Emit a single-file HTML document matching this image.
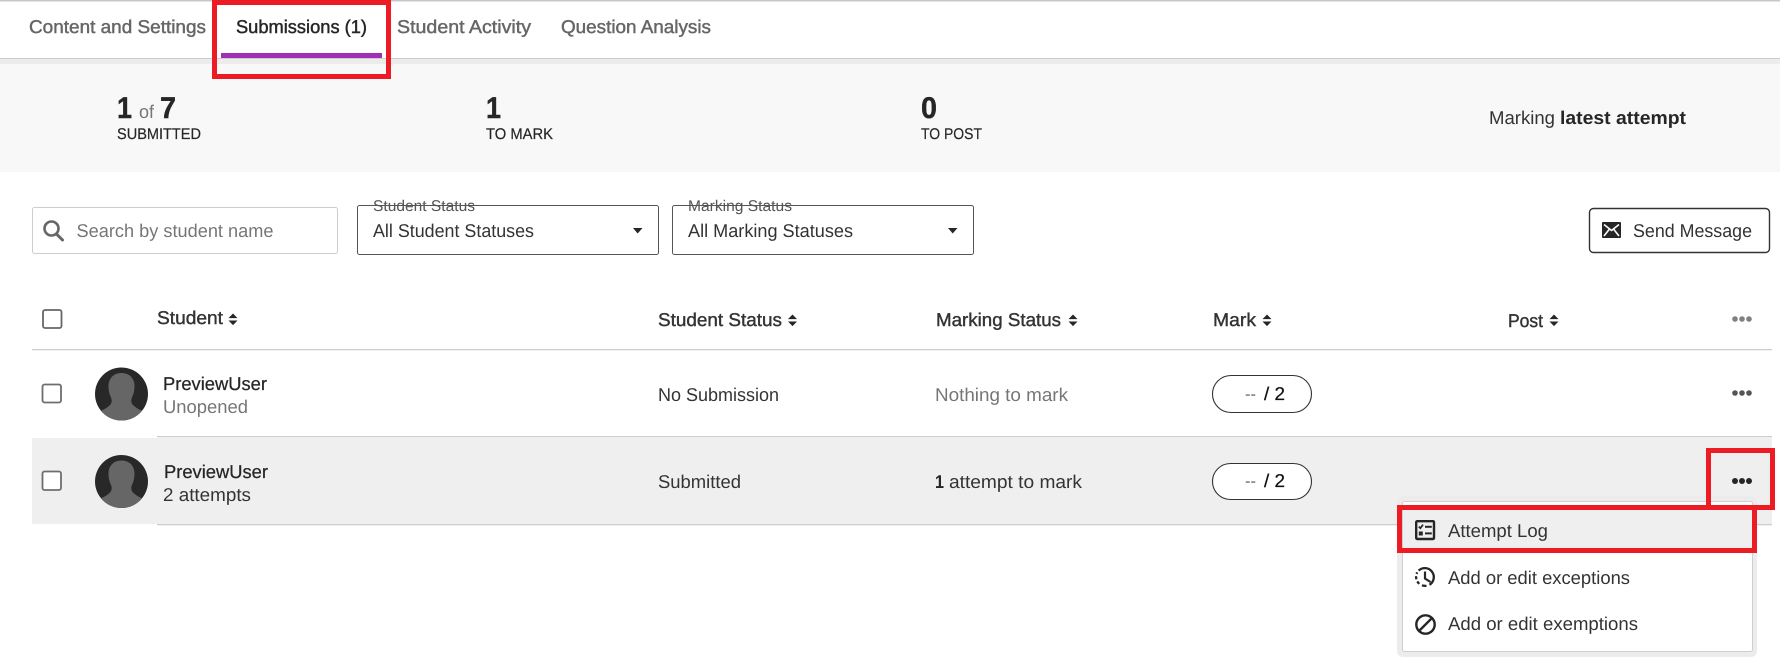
<!DOCTYPE html>
<html lang="en">
<head>
<meta charset="utf-8">
<title>Submissions</title>
<style>
html,body{margin:0;padding:0;background:#fff;width:1780px;height:662px;overflow:hidden}
svg{display:block}
text{font-family:"Liberation Sans",Arial,sans-serif;font-size:18.5px;fill:#333;text-rendering:geometricPrecision}
.semi{stroke:#333;stroke-width:.4px}
.tab{fill:#666;stroke:#666;stroke-width:.45px}
.act{fill:#262626;stroke:#262626;stroke-width:.45px}
.b{font-weight:700;fill:#262626}
.num{font-size:30px;stroke:#262626;stroke-width:.4px}
.g{fill:#767676}
.sm{font-size:15.5px;fill:#262626;stroke:#262626;stroke-width:.2px}
.lbl{font-size:15.5px;fill:#555}
</style>
</head>
<body>
<svg xmlns="http://www.w3.org/2000/svg" width="1780" height="662" viewBox="0 0 1780 662">
<defs>
<g id="sort"><path d="M0 4.6 L4.5 0 L9 4.6 Z M0 7 L9 7 L4.5 11.6 Z" fill="#262626"/></g>
<g id="av">
<circle cx="0" cy="0" r="26.5" fill="#282828"/>
<clipPath id="avc"><circle cx="0" cy="0" r="26.5"/></clipPath>
<g clip-path="url(#avc)">
<path d="M0 -21 C8 -21 13 -15.5 13 -8 C13 -3 12 0 10.5 3.5 C9.3 6 9.5 9.5 12 11.5 C14.5 13.5 17 15.5 21 17 L24 30 L-24 30 L-21 17 C-17 15.5 -14.5 13.5 -12 11.5 C-9.5 9.5 -9.3 6 -10.5 3.5 C-12 0 -13 -3 -13 -8 C-13 -15.5 -8 -21 0 -21 Z" fill="#666"/>
</g>
</g>
</defs>

<!-- top tabs -->
<rect x="0" y="0" width="1780" height="1.5" fill="#c8c8c8"/>
<text class="tab" x="29" y="33" textLength="177" lengthAdjust="spacingAndGlyphs">Content and Settings</text>
<text class="act" x="236" y="33" textLength="131" lengthAdjust="spacingAndGlyphs">Submissions (1)</text>
<text class="tab" x="397" y="33" textLength="134" lengthAdjust="spacingAndGlyphs">Student Activity</text>
<text class="tab" x="561" y="33" textLength="150" lengthAdjust="spacingAndGlyphs">Question Analysis</text>
<rect x="221" y="53" width="161" height="5" fill="#a12fb5"/>
<rect x="0" y="58" width="1780" height="1" fill="#cdcdcd"/>
<rect x="0" y="59" width="1780" height="5" fill="#ececec"/>

<!-- stats band -->
<rect x="0" y="64" width="1780" height="108" fill="#f8f8f8"/>
<text class="b num" x="117" y="118" textLength="15" lengthAdjust="spacingAndGlyphs">1</text>
<text class="g" x="139" y="118" textLength="15" lengthAdjust="spacingAndGlyphs">of</text>
<text class="b num" x="160" y="118" textLength="16" lengthAdjust="spacingAndGlyphs">7</text>
<text class="sm" x="117" y="139" textLength="84" lengthAdjust="spacingAndGlyphs">SUBMITTED</text>
<text class="b num" x="486" y="118" textLength="15" lengthAdjust="spacingAndGlyphs">1</text>
<text class="sm" x="486" y="139" textLength="67" lengthAdjust="spacingAndGlyphs">TO MARK</text>
<text class="b num" x="921" y="118" textLength="16" lengthAdjust="spacingAndGlyphs">0</text>
<text class="sm" x="921" y="139" textLength="61" lengthAdjust="spacingAndGlyphs">TO POST</text>
<text x="1489" y="124" textLength="66" lengthAdjust="spacingAndGlyphs">Marking</text>
<text class="b" x="1560" y="124" textLength="126" lengthAdjust="spacingAndGlyphs">latest attempt</text>

<!-- search -->
<rect x="32.5" y="207.5" width="305" height="46" rx="2" fill="#fff" stroke="#cdcdcd"/>
<circle cx="51.5" cy="228.5" r="7" fill="none" stroke="#666" stroke-width="2.6"/>
<path d="M56.5 234 L62.5 240" stroke="#666" stroke-width="3" stroke-linecap="round"/>
<text class="g" x="76.5" y="237" textLength="197" lengthAdjust="spacingAndGlyphs">Search by student name</text>

<!-- selects -->
<rect x="357.5" y="205.5" width="301" height="49" rx="2" fill="#fff" stroke="#555"/>
<text class="lbl" x="373" y="211" textLength="102" lengthAdjust="spacingAndGlyphs">Student Status</text>
<text x="373" y="237" textLength="161" lengthAdjust="spacingAndGlyphs">All Student Statuses</text>
<path d="M633 228 L642.5 228 L637.7 233.5 Z" fill="#262626"/>

<rect x="672.5" y="205.5" width="301" height="49" rx="2" fill="#fff" stroke="#555"/>
<text class="lbl" x="688" y="211" textLength="104" lengthAdjust="spacingAndGlyphs">Marking Status</text>
<text x="688" y="237" textLength="165" lengthAdjust="spacingAndGlyphs">All Marking Statuses</text>
<path d="M948 228 L957.5 228 L952.7 233.5 Z" fill="#262626"/>

<!-- send message -->
<rect x="1589.5" y="208.5" width="180" height="44" rx="4" fill="#fff" stroke="#333" stroke-width="1.4"/>
<rect x="1602" y="222" width="19" height="16" rx="1" fill="#262626"/>
<path d="M1604 224.5 L1611.5 230.5 L1619 224.5 M1604 236 L1609.5 229 M1619 236 L1613.5 229" fill="none" stroke="#fff" stroke-width="1.6"/>
<text x="1633" y="237" textLength="119" lengthAdjust="spacingAndGlyphs">Send Message</text>

<!-- table header -->
<rect x="43" y="310" width="18.5" height="18" rx="2" fill="#fff" stroke="#666" stroke-width="1.8"/>
<text class="semi" x="157" y="324" textLength="66" lengthAdjust="spacingAndGlyphs">Student</text>
<use href="#sort" x="228.5" y="313.5"/>
<text class="semi" x="658" y="326" textLength="124" lengthAdjust="spacingAndGlyphs">Student Status</text>
<use href="#sort" x="788" y="314.5"/>
<text class="semi" x="936" y="326" textLength="125" lengthAdjust="spacingAndGlyphs">Marking Status</text>
<use href="#sort" x="1068.5" y="314.5"/>
<text class="semi" x="1213" y="326" textLength="43" lengthAdjust="spacingAndGlyphs">Mark</text>
<use href="#sort" x="1262.5" y="314.5"/>
<text class="semi" x="1508" y="327" textLength="35" lengthAdjust="spacingAndGlyphs">Post</text>
<use href="#sort" x="1549.5" y="314.5"/>
<g fill="#808080"><circle cx="1735" cy="319" r="2.8"/><circle cx="1742" cy="319" r="2.8"/><circle cx="1749" cy="319" r="2.8"/></g>
<rect x="32" y="349" width="1740" height="1.3" fill="#cdcdcd"/>

<!-- row 1 -->
<rect x="42.5" y="384.5" width="18.5" height="18" rx="2" fill="#fff" stroke="#6e6e6e" stroke-width="1.8"/>
<use href="#av" x="121.5" y="394"/>
<text class="semi" style="stroke-width:.25px;stroke:#262626;fill:#262626" x="163" y="390" textLength="104" lengthAdjust="spacingAndGlyphs">PreviewUser</text>
<text class="g" x="163" y="413" textLength="85" lengthAdjust="spacingAndGlyphs">Unopened</text>
<text x="658" y="401" textLength="121" lengthAdjust="spacingAndGlyphs">No Submission</text>
<text class="g" x="935" y="401" textLength="133" lengthAdjust="spacingAndGlyphs">Nothing to mark</text>
<rect x="1212.5" y="375.5" width="99" height="37" rx="18.5" fill="#fff" stroke="#333" stroke-width="1.1"/>
<text class="g" x="1245" y="400" textLength="11" lengthAdjust="spacingAndGlyphs">--</text>
<text x="1264" y="400" textLength="21" lengthAdjust="spacingAndGlyphs" style="fill:#111;stroke:#111;stroke-width:.25px">/ 2</text>
<g fill="#555"><circle cx="1735" cy="393" r="2.8"/><circle cx="1742" cy="393" r="2.8"/><circle cx="1749" cy="393" r="2.8"/></g>
<rect x="157" y="436" width="1615" height="1.3" fill="#cdcdcd"/>

<!-- row 2 -->
<rect x="32" y="438" width="1740" height="86" fill="#efefef"/>
<rect x="157" y="524" width="1615" height="1.3" fill="#cdcdcd"/>
<rect x="42.5" y="471.5" width="18.5" height="18.5" rx="2" fill="#fff" stroke="#6e6e6e" stroke-width="1.8"/>
<use href="#av" x="121.5" y="481.5"/>
<text class="semi" style="stroke-width:.25px;stroke:#262626;fill:#262626" x="164" y="478" textLength="104" lengthAdjust="spacingAndGlyphs">PreviewUser</text>
<text x="163" y="501" textLength="88" lengthAdjust="spacingAndGlyphs">2 attempts</text>
<text x="658" y="488" textLength="83" lengthAdjust="spacingAndGlyphs">Submitted</text>
<text class="b" x="935" y="488" textLength="9" lengthAdjust="spacingAndGlyphs">1</text>
<text x="949" y="488" textLength="133" lengthAdjust="spacingAndGlyphs">attempt to mark</text>
<rect x="1212.5" y="463.5" width="99" height="36" rx="18" fill="#fff" stroke="#333" stroke-width="1.1"/>
<text class="g" x="1245" y="487" textLength="11" lengthAdjust="spacingAndGlyphs">--</text>
<text x="1264" y="487" textLength="21" lengthAdjust="spacingAndGlyphs" style="fill:#111;stroke:#111;stroke-width:.25px">/ 2</text>
<g fill="#262626"><circle cx="1735" cy="481" r="3"/><circle cx="1742" cy="481" r="3"/><circle cx="1749" cy="481" r="3"/></g>

<!-- menu -->
<rect x="1397" y="496" width="360" height="161" rx="6" fill="#ececec"/>
<rect x="1402.5" y="501.5" width="350" height="150" rx="2" fill="#fff" stroke="#cfcfcf"/>
<rect x="1403" y="510" width="349" height="38" fill="#efefef"/>

<!-- attempt log icon -->
<rect x="1416.2" y="521.2" width="17.8" height="17.8" rx="1" fill="none" stroke="#262626" stroke-width="2.4"/>
<path d="M1418.8 526.6 L1420.4 528.2 L1423 524.6" fill="none" stroke="#262626" stroke-width="1.7"/>
<rect x="1418.8" y="531.5" width="4" height="4" fill="#262626"/>
<rect x="1425" y="525.8" width="6.8" height="2" fill="#262626"/>
<rect x="1425" y="532.4" width="6.8" height="2" fill="#262626"/>
<text x="1448" y="537" textLength="100" lengthAdjust="spacingAndGlyphs">Attempt Log</text>

<!-- clock icon -->
<path d="M1418.6 570.6 A9 9 0 1 1 1429.5 584.8" fill="none" stroke="#262626" stroke-width="2.3"/>
<path d="M1426.5 586 L1421.9 585.5 M1419.2 583.9 L1417.2 581.5 M1416.3 579.3 L1416 576.2 M1416.5 573.9 L1417.2 572.4" fill="none" stroke="#262626" stroke-width="2.3"/>
<path d="M1425 571.5 L1425 578.5 L1430.5 582" fill="none" stroke="#262626" stroke-width="2.2"/>
<text x="1448" y="584" textLength="182" lengthAdjust="spacingAndGlyphs">Add or edit exceptions</text>

<!-- no icon -->
<circle cx="1425.5" cy="624.5" r="9.2" fill="none" stroke="#262626" stroke-width="2.4"/>
<path d="M1419 631 L1432 618" stroke="#262626" stroke-width="2.4"/>
<text x="1448" y="630" textLength="190" lengthAdjust="spacingAndGlyphs">Add or edit exemptions</text>

<!-- red highlights -->
<g fill="none" stroke="#ed1c24" stroke-width="5">
<rect x="214.5" y="2.5" width="174" height="74"/>
<path d="M1708.5 505 L1708.5 450.5 L1772.5 450.5 L1772.5 507.5 L1708.5 507.5"/>
<rect x="1399.5" y="507.5" width="355" height="43"/>
</g>
</svg>
</body>
</html>
